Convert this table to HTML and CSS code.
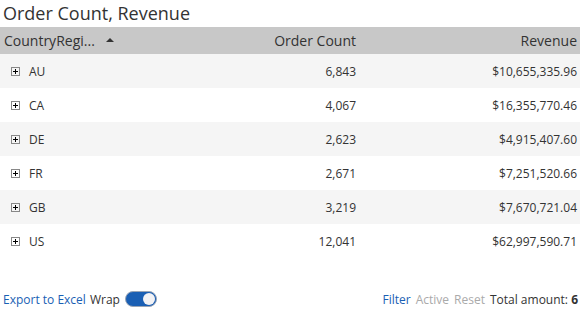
FILE: index.html
```html
<!DOCTYPE html>
<html>
<head>
<meta charset="utf-8">
<link rel="stylesheet" href="styles.css">
</head>
<body>
<div class="widget">
  <div class="title">Order Count, Revenue</div>
  <div class="grid">
    <div class="row head">
      <div class="cell c1"><span class="hname">CountryRegi...</span><span class="sort"></span></div>
      <div class="cell c2">Order Count</div>
      <div class="cell c3">Revenue</div>
    </div>
    <div class="row alt"><div class="cell c1"><span class="exp"></span>AU</div><div class="cell c2">6,843</div><div class="cell c3">$10,655,335.96</div></div>
    <div class="row"><div class="cell c1"><span class="exp"></span>CA</div><div class="cell c2">4,067</div><div class="cell c3">$16,355,770.46</div></div>
    <div class="row alt"><div class="cell c1"><span class="exp"></span>DE</div><div class="cell c2">2,623</div><div class="cell c3">$4,915,407.60</div></div>
    <div class="row"><div class="cell c1"><span class="exp"></span>FR</div><div class="cell c2">2,671</div><div class="cell c3">$7,251,520.66</div></div>
    <div class="row alt"><div class="cell c1"><span class="exp"></span>GB</div><div class="cell c2">3,219</div><div class="cell c3">$7,670,721.04</div></div>
    <div class="row"><div class="cell c1"><span class="exp"></span>US</div><div class="cell c2">12,041</div><div class="cell c3">$62,997,590.71</div></div>
  </div>
  <div class="footer">
    <div class="fleft">
      <span class="link">Export to Excel</span>
      <span class="dark">Wrap</span>
      <span class="toggle"><span class="knob"></span></span>
    </div>
    <div class="fright">
      <span class="link">Filter</span>
      <span class="muted">Active</span>
      <span class="muted">Reset</span>
      <span class="dark">Total amount: <b>6</b></span>
    </div>
  </div>
</div>
</body>
</html>
```
FILE: styles.css
```css
html, body {
  margin: 0;
  padding: 0;
  background: #ffffff;
}
body {
  font-family: "Open Sans", "Liberation Sans", sans-serif;
  color: #333333;
}
.widget {
  width: 580px;
  height: 319px;
  display: flex;
  flex-direction: column;
}
.title {
  font-size: 18px;
  line-height: 27px;
  padding-left: 3px;
  color: #333333;
  height: 27px;
}
.grid {
  display: flex;
  flex-direction: column;
}
.row {
  display: grid;
  grid-template-columns: 200px 160px 220px;
  height: 34px;
  align-items: center;
  font-size: 12px;
  background: #ffffff;
}
.row.alt {
  background: #f5f5f5;
}
.row.head {
  height: 27px;
  background: #c8c8c8;
  font-size: 14px;
  color: #333333;
}
.cell {
  display: flex;
  align-items: center;
}
.c1 {
  padding-left: 11px;
}
.head .c1 {
  padding-left: 4px;
}
.c2, .c3 {
  justify-content: flex-end;
}
.c2 {
  padding-right: 4px;
}
.c3 {
  padding-right: 3px;
}
.hname {
  margin-right: 11px;
}
.sort {
  width: 0;
  height: 0;
  border-left: 4px solid transparent;
  border-right: 4px solid transparent;
  border-bottom: 4px solid #333333;
  margin-top: -2px;
}
.exp {
  width: 7px;
  height: 7px;
  border: 1px solid #888888;
  margin-right: 9px;
  box-sizing: content-box;
  background:
    linear-gradient(#000, #000) center / 5px 1px no-repeat,
    linear-gradient(#000, #000) center / 1px 5px no-repeat;
}
.footer {
  margin-top: auto;
  height: 40px;
  padding: 0 2px 0 3px;
  display: flex;
  justify-content: space-between;
  align-items: center;
  font-size: 12px;
}
.fleft, .fright {
  display: flex;
  align-items: center;
  gap: 4px;
}
.fright {
  gap: 5px;
}
.link {
  color: #1a5fb4;
}
.dark {
  color: #333333;
}
.dark b {
  font-weight: 700;
}
.muted {
  color: #aaaaaa;
}
.toggle {
  width: 28px;
  height: 14px;
  border-radius: 8px;
  background: #1a5fb4;
  border: 1px solid #9aa5b5;
  display: inline-flex;
  align-items: center;
  justify-content: flex-end;
  padding: 0 1px;
  margin-left: 1px;
}
.knob {
  width: 12px;
  height: 12px;
  border-radius: 50%;
  background: #f2f2f5;
}
```
